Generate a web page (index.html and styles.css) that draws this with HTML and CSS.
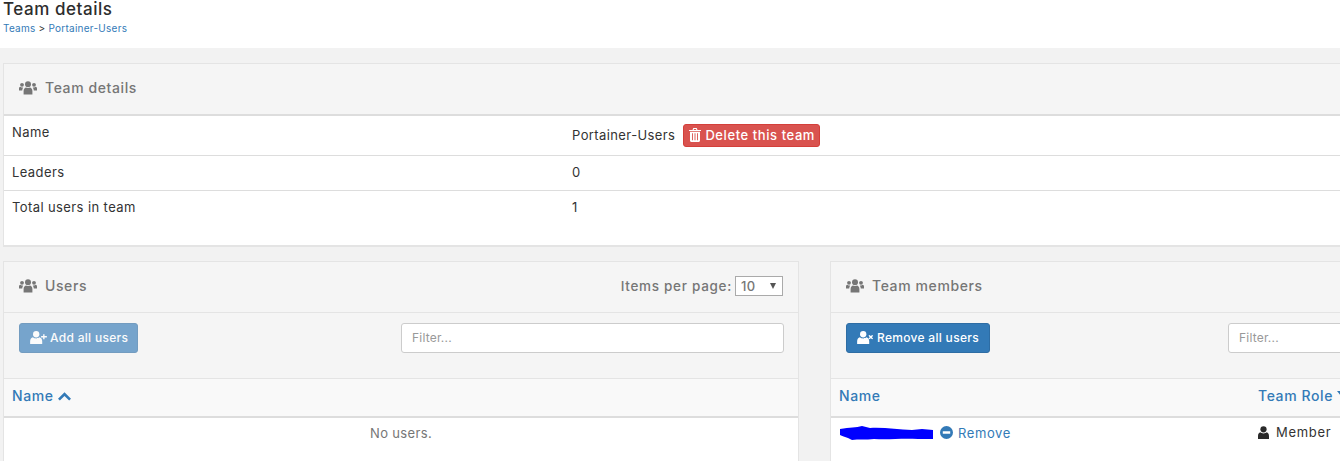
FILE: index.html
```html
<!DOCTYPE html>
<html lang="en">
<head>
<meta charset="utf-8">
<title>Team details</title>
<link rel="stylesheet" href="styles.css">
</head>
<body>
<svg class="defs" width="0" height="0" aria-hidden="true">
  <symbol id="i-users" viewBox="0 0 18 14">
    <circle cx="9" cy="3.3" r="3"/>
    <path d="M4.6 13.4V10c0-2.2 1.4-3.5 2.6-3.6.5.4 1.1.7 1.8.7s1.3-.3 1.8-.7c1.2.1 2.6 1.4 2.6 3.6v3.4z"/>
    <circle cx="3" cy="3.8" r="1.9"/>
    <circle cx="15" cy="3.8" r="1.9"/>
    <path d="M0 9.6V7.6c0-1 .6-1.8 1.4-1.8.4.4 1 .6 1.6.6h1.2c-.6.8-1 1.9-1 3.2z"/>
    <path d="M18 9.6V7.6c0-1-.6-1.8-1.4-1.8-.4.4-1 .6-1.6.6h-1.2c.6.8 1 1.9 1 3.2z"/>
  </symbol>
  <symbol id="i-trash" viewBox="0 0 12 14">
    <path d="M4.3 0h3.4l.8 1.9H12v1.2H0V1.9h3.5zM5 1.1l-.3.8h2.6l-.3-.8z"/>
    <path fill-rule="evenodd" d="M1 3.7h10v8.9c0 .8-.5 1.4-1.2 1.4H2.2C1.500 14 1 13.400 1 12.600zM3 5.300v6.900h.9V5.300zm2.550 0v6.900h.9V5.300zm2.550 0v6.900H9V5.300z"/>
  </symbol>
  <symbol id="i-user-plus" viewBox="0 0 18 14">
    <circle cx="6.500" cy="3.500" r="3.400"/>
    <path d="M0 14v-3c0-2.500 1.300-4 3-4.300.9.800 2.100 1.300 3.500 1.300s2.600-.5 3.500-1.300c1.700.3 3 1.800 3 4.300v3z"/>
    <path d="M14 3.500h1.500V5.500H18v1.500h-2.500V9H14V7h-2.200V5.500H14z"/>
  </symbol>
  <symbol id="i-user-times" viewBox="0 0 18 14">
    <circle cx="6.500" cy="3.500" r="3.400"/>
    <path d="M0 14v-3c0-2.500 1.300-4 3-4.300.9.800 2.100 1.300 3.500 1.300s2.600-.5 3.500-1.300c1.700.3 3 1.800 3 4.300v3z"/>
    <path d="M13.200 4.200l1.500 1.300 1.500-1.300 1 1-1.400 1.400 1.400 1.400-1 1-1.500-1.300-1.500 1.300-1-1 1.400-1.400-1.400-1.400z"/>
  </symbol>
  <symbol id="i-user" viewBox="0 0 12 14">
    <circle cx="6" cy="3.500" r="3.400"/>
    <path d="M0 14v-3.200c0-2.300 1.100-3.800 2.500-4.100.9.800 2.100 1.300 3.500 1.300s2.600-.5 3.500-1.300c1.400.3 2.500 1.800 2.500 4.100V14z"/>
  </symbol>
</svg>

<header class="page-head">
  <h1>Team details</h1>
  <p class="crumbs"><a href="#">Teams</a> &gt; <a href="#">Portainer-Users</a></p>
</header>

<main class="content">
  <div class="canvas">
  <section class="widget details">
    <h2 class="widget-head"><svg class="ic-users"><use href="#i-users"/></svg>Team details</h2>
    <table class="info">
      <tr class="row-name">
        <td class="label">Name</td>
        <td>
          <div class="name-cell">
            <span class="name-value">Portainer-Users</span>
            <button class="btn btn-danger"><svg class="ic-trash"><use href="#i-trash"/></svg>Delete this team</button>
          </div>
        </td>
      </tr>
      <tr class="row-leaders"><td class="label">Leaders</td><td>0</td></tr>
      <tr class="row-total"><td class="label">Total users in team</td><td>1</td></tr>
    </table>
  </section>

  <div class="columns">
    <section class="widget list">
      <div class="widget-head split">
        <h2 class="head-title"><svg class="ic-users"><use href="#i-users"/></svg>Users</h2>
        <label class="pager">Items per page:
          <span class="select-wrap"><select><option>10</option></select></span>
        </label>
      </div>
      <div class="toolbar">
        <button class="btn btn-primary faded"><svg class="ic-btn"><use href="#i-user-plus"/></svg>Add all users</button>
        <input class="filter" type="text" placeholder="Filter...">
      </div>
      <table class="grid">
        <thead><tr><th><a href="#">Name <svg class="ic-chev" viewBox="0 0 14 9"><path d="M7 0l7 6.800-2 2-5-4.800-5 4.800-2-2z"/></svg></a></th></tr></thead>
        <tbody><tr><td class="empty">No users.</td></tr></tbody>
      </table>
    </section>

    <section class="widget list">
      <div class="widget-head split">
        <h2 class="head-title"><svg class="ic-users"><use href="#i-users"/></svg>Team members</h2>
      </div>
      <div class="toolbar">
        <button class="btn btn-primary"><svg class="ic-btn"><use href="#i-user-times"/></svg>Remove all users</button>
        <input class="filter" type="text" placeholder="Filter...">
      </div>
      <table class="grid members">
        <thead><tr><th class="c-name"><a href="#">Name</a></th><th><a href="#">Team Role <svg class="ic-sort" viewBox="0 0 10 6"><path d="M0 0h10L5 6z"/></svg></a></th></tr></thead>
        <tbody><tr>
          <td class="c-name">
            <div class="member-cell">
              <svg class="scribble" viewBox="0 0 94 16"><path d="M0 4 C10 2 16 3 22 1 L30 3 C44 2 58 5 72 5 L82 4 L93 5 V14 L78 14 C60 13 50 15 34 14 C26 15 18 14 12 15 L8 13 C5 12 2 11 0 10z"/></svg>
              <a href="#" class="remove"><svg class="ic-minus" viewBox="0 0 14 14"><path fill-rule="evenodd" d="M7 0a7 7 0 1 1 0 14A7 7 0 0 1 7 0zM3 5.700v2.600h8V5.700z"/></svg>Remove</a>
            </div>
          </td>
          <td><span class="role"><svg class="ic-user"><use href="#i-user"/></svg>Member</span></td>
        </tr></tbody>
      </table>
    </section>
  </div>
  </div>
</main>
</body>
</html>
```

FILE: styles.css
```css
* { box-sizing: border-box; }
html, body { margin: 0; height: 461px; overflow: hidden; }
body {
  width: 1340px;
  background: #f2f2f2;
  font-family: Inter, "Liberation Sans", sans-serif;
  font-size: 13px;
  color: #333;
}
a { color: #337ab7; text-decoration: none; }
.defs { position: absolute; }
svg { fill: currentColor; flex: none; }

.page-head { height: 48px; background: #fff; padding: 0 3px; }
.page-head h1 {
  margin: 0;
  font-size: 17px;
  line-height: 18px;
  font-weight: 500;
  letter-spacing: .55px;
  color: #2d2d2d;
}
.crumbs { margin: 3px 0 0; font-size: 10px; line-height: 14px; letter-spacing: .25px; color: #333; }

.content { height: 413px; overflow: hidden; padding: 15px 0 0 3px; }
.canvas { width: 1657px; }
.widget { background: #fff; border: 1px solid #e4e4e4; border-right: 0; border-bottom-width: 2px; }
.details { height: 184px; }

.widget-head {
  margin: 0;
  height: 50px;
  padding: 0 15px 3px;
  display: flex;
  align-items: center;
  background: #f5f5f5;
  font-size: 14px;
  font-weight: 500;
  letter-spacing: .6px;
  color: #767676;
}
.details .widget-head { border-bottom: 2px solid #ddd; height: 52px; }
.ic-users { width: 18px; height: 14px; margin-right: 8px; color: #767676; }
.head-title { display: flex; align-items: center; margin: 0; font: inherit; letter-spacing: inherit; }

.info { width: 100%; border-collapse: collapse; letter-spacing: .4px; }
.info td { padding: 7px 8px; vertical-align: top; line-height: 18px; color: #333; }
.info .label { width: 560px; }
.info tr + tr td { border-top: 1px solid #ddd; }
.row-name { height: 39px; }
.row-leaders { height: 35px; }
.row-name td + td { padding: 8px; }
.name-cell { display: flex; align-items: center; gap: 8px; }
.name-value { padding-bottom: 2px; }

.btn {
  display: inline-flex;
  align-items: center;
  border: 1px solid transparent;
  border-radius: 3px;
  font-family: inherit;
  font-size: 12px;
  font-weight: 500;
  letter-spacing: .3px;
  color: #fff;
  padding: 0;
}
.btn-danger { height: 23px; padding: 0 4px 1px 5px; background: #d9534f; border-color: #d43f3a; font-size: 13px; letter-spacing: .58px; }
.ic-trash { width: 12px; height: 14px; margin-right: 4px; }
.btn-primary { height: 30px; padding: 0 10px 1px; background: #337ab7; border-color: #2e6da4; }
.faded { opacity: .65; padding-right: 9px; }
.ic-btn { width: 17px; height: 13px; margin-right: 3px; }

.columns { display: grid; grid-template-columns: 796px 796px; column-gap: 31px; margin-top: 14px; }
.list { height: 260px; border-right: 1px solid #e4e4e4; }
.split { justify-content: space-between; border-bottom: 1px solid #e4e4e4; height: 51px; }
.pager { display: flex; align-items: center; gap: 3px; letter-spacing: .7px; font-size: 13.500px; margin-top: 1px; }
.select-wrap { position: relative; display: block; width: 48px; height: 20px; }
.select-wrap::after {
  content: "";
  position: absolute;
  right: 7px;
  top: 7px;
  border-left: 3.500px solid transparent;
  border-right: 3.500px solid transparent;
  border-top: 6px solid #555;
}
select {
  appearance: none;
  display: block;
  width: 100%;
  height: 100%;
  padding: 0 0 0 5px;
  border: 1px solid #aaa;
  border-radius: 0;
  background: #fff;
  font: inherit;
  font-size: 13px;
  letter-spacing: .3px;
  color: #767676;
}

.toolbar {
  height: 66px;
  padding: 10px 14px 0 15px;
  background: #f5f5f5;
  border-bottom: 1px solid #e4e4e4;
  display: flex;
  align-items: flex-start;
  justify-content: space-between;
}
.filter {
  width: 383px;
  height: 30px;
  border: 1px solid #ccc;
  border-radius: 3px;
  background: #fff;
  padding: 0 10px 2px;
  font: inherit;
  font-size: 12px;
  color: #555;
}
.filter::placeholder { color: #999; letter-spacing: .2px; }

.grid { width: 100%; border-collapse: collapse; letter-spacing: .6px; }
.grid th {
  height: 38px;
  padding: 0 8px 4px;
  text-align: left;
  background: #f9f9f9;
  border-bottom: 2px solid #ddd;
  font-weight: 500;
  font-size: 14px;
  letter-spacing: .6px;
}
.grid td { padding: 5px 8px 6px; line-height: 18px; }
.grid .empty { padding-top: 6px; letter-spacing: .35px; text-align: center; color: #767676; }
.ic-chev { width: 13px; height: 9px; }
.ic-sort { width: 8px; height: 5px; vertical-align: 5px; }
.members .c-name { width: 419px; }
.member-cell { display: flex; align-items: center; gap: 6px; }
.scribble { width: 94px; height: 16px; fill: #0000ff; margin-left: 1px; }
.remove { display: inline-flex; align-items: center; gap: 5px; }
.ic-minus { width: 13px; height: 13px; }
.role { display: inline-flex; align-items: center; gap: 7px; color: #333; letter-spacing: .7px; }
.ic-user { width: 11px; height: 13px; color: #2a2a2a; }
```
